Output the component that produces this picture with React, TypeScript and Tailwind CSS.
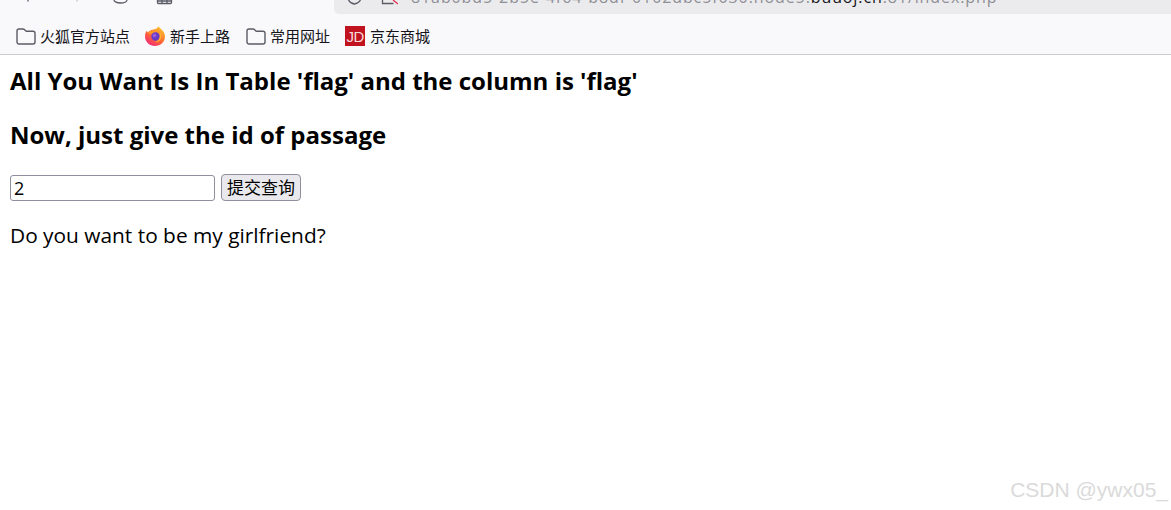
const font = { fontFamily: '"Open Sans", "Noto Sans CJK SC", sans-serif' };

function Folder() {
  return (
    <svg width="20" height="18" viewBox="0 0 20 18" fill="none" stroke="#5b5b66" strokeWidth="1.4" className="shrink-0">
      <path d="M1 4a2 2 0 0 1 2-2h4c.6 0 1 .2 1.400.6l1.200 1.200c.3.3.6.4 1 .4h6.400a2 2 0 0 1 2 2V15a2 2 0 0 1-2 2H3a2 2 0 0 1-2-2z" />
    </svg>
  );
}

function Firefox() {
  return (
    <svg width="20" height="20" viewBox="0 0 20 20" className="shrink-0">
      <defs>
        <linearGradient id="fx" x1="0.8" y1="0.1" x2="0.2" y2="1">
          <stop offset="0" stopColor="#ffbd2e" />
          <stop offset="0.5" stopColor="#ff6a30" />
          <stop offset="1" stopColor="#f0257f" />
        </linearGradient>
      </defs>
      <path d="M13.500 0c.4 1.500 1.500 2 3 3.500C18.800 5.500 20 8 20 10.500 20 16 15.500 20 10 20S0 15.800 0 10.500C0 8 .8 5.800 2 4.500c0 1 .4 1.600 1 2 1-1.500 2.500-2.500 4.500-2.800C10 3.300 12.800 2.500 13.500 0z" fill="url(#fx)" />
      <path d="M3 6.500c1.500-1.500 6-2 8.500-.5-1.500 0-3 .5-3.500 1.500-1.500.5-3.500 1-5-1z" fill="#ff9a2a" />
      <circle cx="10.500" cy="10.500" r="4.200" fill="#6a3bc9" />
      <circle cx="9.500" cy="9.500" r="1.800" fill="#9a5fe0" />
      <path d="M14.500 6c2 2 2.500 5 1 7.500-1.200 2-3.500 3-5.500 2.800 3-1 4.500-3 4.800-5.500.2-1.700 0-3.300-.3-4.800z" fill="#ffb52e" />
    </svg>
  );
}

function Bookmark({ icon, label, gap }: { icon: React.ReactNode; label: string; gap: string }) {
  return (
    <div className={`flex items-center ${gap}`}>
      {icon}
      <span className="text-[15px] leading-5 text-[#15141a]">{label}</span>
    </div>
  );
}

export default function App() {
  return (
    <div className="relative h-[510px] w-[1171px] overflow-hidden bg-white text-black" style={font}>
      {/* 地址栏，上半部分被截掉 */}
      <div className="flex h-[14px] overflow-hidden bg-[#f9f9fb]">
        <div className="h-[14px] w-[334px] shrink-0">
          <svg width="180" height="5" viewBox="0 0 180 5" fill="none" stroke="#5b5b66" strokeWidth="1.3">
            <path d="M28 0v1.500" />
            <path d="M77 0v1.500" stroke="#c8c8cc" />
            <path d="M114 0a6.500 3 0 0 0 13 0" />
            <path d="M157.500 0v2.500a1 1 0 0 0 1 1h12a1 1 0 0 0 1-1V0M157.500 1h14M162 0v3.500M167 0v3.500" />
          </svg>
        </div>
        <div className="flex h-[14px] flex-1 items-start rounded-bl-[5px] bg-[#ebebed] pl-[14px]">
          <svg width="50" height="5" viewBox="0 0 50 5" fill="none" strokeWidth="1.3" className="shrink-0">
            <path d="M0.500 0c1 2 3 3.500 6 4 3-.5 5-2 6-4" stroke="#5b5b66" />
            <path d="M34.500 0v3.500h11" stroke="#5b5b66" />
            <path d="M45 0l5 4" stroke="#e22850" />
          </svg>
          <span className="ml-[13px] -mt-[13px] whitespace-nowrap text-[16px] leading-[20px] tracking-[0.9px] text-[#8f8f96]">
            81ab0bd5-2b5e-4f64-b8df-0102dbc5f030.node5.<span className="text-[#15141a]">buuoj.cn</span>:81/index.php
          </span>
        </div>
      </div>

      {/* 书签栏 */}
      <div className="flex h-[41px] items-center gap-[15px] border-b border-[#cccccc] bg-[#f9f9fb] pl-[16px] pt-[4px]">
        <Bookmark icon={<Folder />} label="火狐官方站点" gap="gap-[4px]" />
        <Bookmark icon={<Firefox />} label="新手上路" gap="gap-[5px]" />
        <Bookmark icon={<Folder />} label="常用网址" gap="gap-[4px] ml-[1px]" />
        <Bookmark
          icon={
            <span
              className="flex h-5 w-5 shrink-0 items-center justify-center bg-[#c1121f] text-[15px] leading-none tracking-[-0.5px] text-[#f8dada]"
              style={{ fontFamily: '"Liberation Sans", sans-serif' }}
            >
              JD
            </span>
          }
          label="京东商城"
          gap="gap-[5px]"
        />
      </div>

      {/* 页面内容 */}
      <div className="px-[10px] pt-[11px]">
        <h3 className="text-[24px] font-bold leading-[30px]">All You Want Is In Table 'flag' and the column is 'flag'</h3>
        <h3 className="mt-[24px] text-[24px] font-bold leading-[30px]">Now, just give the id of passage</h3>
        <div className="mt-[24px] flex items-center gap-[6px]">
          <input
            readOnly
            value="2"
            className="h-[26px] w-[205px] rounded-[3px] border border-[#8f8f9d] px-[3px] text-[18px] leading-none text-black outline-none"
          />
          <button className="h-[27px] w-[80px] rounded-[4px] border border-[#8f8f9d] bg-[#e9e9ed] px-0 text-[17px] leading-none text-black">
            提交查询
          </button>
        </div>
        <p className="mt-[20px] text-[20.860px] leading-[28px]">Do you want to be my girlfriend?</p>
      </div>

      {/* 水印 */}
      <span className="absolute bottom-[6px] right-[3px] text-[21px] leading-7 text-[#dadada]" style={{ fontFamily: '"Liberation Sans", sans-serif' }}>
        CSDN @ywx05_
      </span>
    </div>
  );
}
